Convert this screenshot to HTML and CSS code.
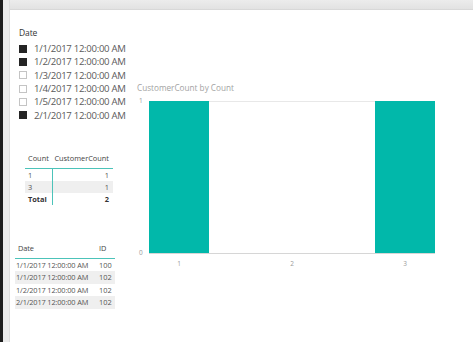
FILE: index.html
```
<!DOCTYPE html>
<html>
<head>
<meta charset="utf-8">
<link rel="stylesheet" href="styles.css">
</head>
<body>
<div class="app">
  <div class="rail-dark"></div>
  <div class="rail-light"></div>
  <div class="main">
    <div class="topbar"></div>
    <div class="canvas">
      <div class="left">
        <div class="slicer">
          <div class="slicer-title">Date</div>
          <ul class="slicer-list">
            <li class="item checked"><span class="box"></span><span class="label">1/1/2017 12:00:00 AM</span></li>
            <li class="item checked"><span class="box"></span><span class="label">1/2/2017 12:00:00 AM</span></li>
            <li class="item"><span class="box"></span><span class="label">1/3/2017 12:00:00 AM</span></li>
            <li class="item"><span class="box"></span><span class="label">1/4/2017 12:00:00 AM</span></li>
            <li class="item"><span class="box"></span><span class="label">1/5/2017 12:00:00 AM</span></li>
            <li class="item checked"><span class="box"></span><span class="label">2/1/2017 12:00:00 AM</span></li>
          </ul>
        </div>

        <table class="tbl tbl-count">
          <thead>
            <tr><th class="c1">Count</th><th class="c2">CustomerCount</th></tr>
          </thead>
          <tbody>
            <tr><td class="c1">1</td><td class="c2">1</td></tr>
            <tr class="alt"><td class="c1">3</td><td class="c2">1</td></tr>
            <tr class="total"><td class="c1">Total</td><td class="c2">2</td></tr>
          </tbody>
        </table>

        <table class="tbl tbl-date">
          <thead>
            <tr><th class="d1">Date</th><th class="d2">ID</th></tr>
          </thead>
          <tbody>
            <tr><td class="d1">1/1/2017 12:00:00 AM</td><td class="d2">100</td></tr>
            <tr class="alt"><td class="d1">1/1/2017 12:00:00 AM</td><td class="d2">102</td></tr>
            <tr><td class="d1">1/2/2017 12:00:00 AM</td><td class="d2">102</td></tr>
            <tr class="alt"><td class="d1">2/1/2017 12:00:00 AM</td><td class="d2">102</td></tr>
          </tbody>
        </table>
      </div>

      <div class="chart">
        <div class="chart-title">CustomerCount by Count</div>
        <div class="plot-wrap">
          <div class="yaxis"><span>1</span><span>0</span></div>
          <div class="plot">
            <div class="bar" style="height:100%"></div>
            <div class="bar" style="height:0%"></div>
            <div class="bar" style="height:100%"></div>
          </div>
        </div>
        <div class="xaxis"><span>1</span><span>2</span><span>3</span></div>
      </div>
    </div>
  </div>
</div>
</body>
</html>
```
FILE: styles.css
```
* { box-sizing: border-box; }
html, body { margin: 0; padding: 0; }
body {
  width: 474px;
  height: 342px;
  overflow: hidden;
  background: #ffffff;
  font-family: "Open Sans", "Noto Sans", sans-serif;
}
.app {
  display: flex;
  width: 474px;
  height: 342px;
}
.rail-dark {
  width: 3px;
  background: #1e1e1e;
}
.rail-light {
  width: 7px;
  background: #ebebeb;
  border-right: 1px solid #dedede;
}
.main {
  flex: 1;
  display: flex;
  flex-direction: column;
}
.topbar {
  height: 10px;
  background: linear-gradient(#ececec, #e2e2e2);
  border-bottom: 1px solid #d8d8d8;
  margin-right: 1px;
}
.canvas {
  flex: 1;
  display: flex;
  background: #fff;
}
.left {
  width: 127px;
  display: flex;
  flex-direction: column;
}

/* slicer */
.slicer {
  margin-top: 17px;
  margin-left: 9px;
}
.slicer-title {
  font-size: 8.5px;
  line-height: 12px;
  color: #333;
  letter-spacing: -0.1px;
  margin-bottom: 3px;
}
.slicer-list {
  list-style: none;
  margin: 0;
  padding: 0;
}
.item {
  display: flex;
  align-items: center;
  height: 13.3px;
}
.box {
  width: 8px;
  height: 8px;
  border: 1px solid #c4c4c4;
  background: #fff;
  margin-right: 7px;
  flex: none;
}
.item.checked .box {
  background: #252525;
  border-color: #252525;
}
.label {
  font-size: 9.6px;
  color: #5a5a5a;
  letter-spacing: -0.3px;
  white-space: nowrap;
}

/* tables */
.tbl {
  border-collapse: collapse;
  font-size: 7.4px;
  color: #555;
  table-layout: fixed;
}
.tbl th {
  font-weight: normal;
  color: #444;
  line-height: 12px;
  padding: 0 0 4px 0;
  border-bottom: 1px solid #4cc3b9;
  white-space: nowrap;
}
.tbl td {
  white-space: nowrap;
  padding: 0;
}
.tbl tr.alt td { background: #efefef; }

.tbl-count {
  margin-top: 30px;
  margin-left: 15px;
  width: 88px;
}
.tbl-count .c1 { width: 27.5px; text-align: left; padding-left: 3px; }
.tbl-count .c2 { width: 60.5px; text-align: right; padding-right: 4px; }
.tbl-count td { height: 12px; line-height: 12px; }
.tbl-count td.c2 { border-left: 1px solid #4cc3b9; }
.tbl-count tr.total td { font-weight: bold; color: #333; }

.tbl-date {
  margin-top: 37px;
  margin-left: 5px;
  width: 100px;
}
.tbl-date .d1 { width: 82px; text-align: left; padding-left: 1px; letter-spacing: -0.15px; }
.tbl-date th.d1 { padding-left: 3px; }
.tbl-date .d2 { width: 18px; text-align: left; padding-left: 2px; }
.tbl-date td { height: 12.5px; line-height: 12.5px; }

/* chart */
.chart {
  margin-top: 72px;
  display: flex;
  flex-direction: column;
}
.chart-title {
  font-size: 8.2px;
  line-height: 12px;
  color: #a3a3a3;
  margin-left: 0;
  white-space: nowrap;
}
.plot-wrap {
  display: flex;
  margin-top: 7px;
}
.yaxis {
  width: 12px;
  height: 152px;
  display: flex;
  flex-direction: column;
  justify-content: space-between;
  font-size: 6.5px;
  color: #9a9a9a;
  padding-left: 2px;
}
.yaxis span {
  line-height: 10px;
  margin: -5px 0;
}
.plot {
  width: 286px;
  height: 153px;
  display: flex;
  justify-content: space-between;
  align-items: flex-end;
  background: linear-gradient(#e8e8e8, #e8e8e8) top / 100% 1px no-repeat;
  border-bottom: 1px solid #d6d6d6;
}
.bar {
  width: 60px;
  background: #01b8aa;
}
.xaxis {
  margin-left: 12px;
  margin-top: 5px;
  width: 286px;
  display: flex;
  justify-content: space-between;
  font-size: 6.5px;
  color: #9a9a9a;
}
.xaxis span {
  width: 60px;
  text-align: center;
  line-height: 10px;
}
```
